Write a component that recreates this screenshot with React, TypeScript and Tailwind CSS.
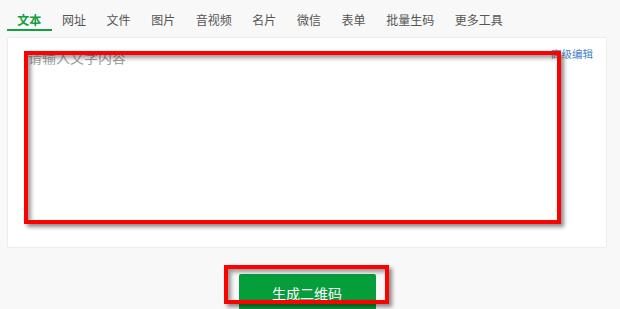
import React from "react";

const tabs = ["文本", "网址", "文件", "图片", "音视频", "名片", "微信", "表单", "批量生码", "更多工具"];

const annot =
  "absolute border-[4px] border-[#ff0000] shadow-[3px_3px_4px_rgba(0,0,0,0.45),inset_3px_3px_4px_rgba(0,0,0,0.4)] pointer-events-none";

export default function App() {
  return (
    <div
      className="relative w-[620px] h-[309px] overflow-hidden bg-[#f8f8f8]"
      style={{ fontFamily: '"Noto Sans CJK SC", "Noto Sans", sans-serif' }}
    >
      <div className="flex pl-[7px]">
        {tabs.map((t, i) => (
          <div
            key={t}
            className={
              i === 0
                ? "px-[10.3px] pt-[11px] pb-[1px] text-[12px] leading-[17px] border-b-2 border-[#14a03c] text-[#14a03c] font-bold"
                : "px-[10.3px] pt-[11px] pb-[1px] text-[12px] leading-[17px] border-b-2 border-transparent text-[#555]"
            }
          >
            {t}
          </div>
        ))}
      </div>
      <div className="w-[614px] px-[7px] mt-[6px] flex flex-col">
        <div className="h-[211px] bg-white border border-[#ececec] rounded-[2px] flex items-start justify-between pl-[20px] pr-[13px] pt-[9px]">
          <div className="text-[14px] leading-[20px] text-[#a0a0a0]">请输入文字内容</div>
          <div className="text-[10.5px] leading-[14px] text-[#4a86c8]">高级编辑</div>
        </div>
        <div className="flex justify-center mt-[26px]">
          <button className="w-[137px] h-[38px] bg-[#069d3b] rounded-[2px] text-white text-[14px] leading-[20px]">
            生成二维码
          </button>
        </div>
      </div>
      <div className={annot + " left-[24px] top-[51px] w-[537px] h-[173px]"} />
      <div className={annot + " left-[224px] top-[265px] w-[165px] h-[39px]"} />
    </div>
  );
}
